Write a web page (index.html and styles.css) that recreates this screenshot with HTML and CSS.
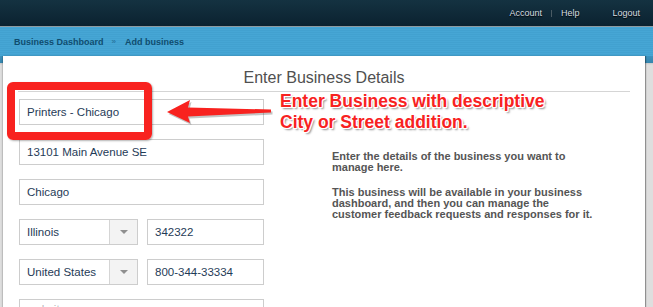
FILE: index.html
```html
<!DOCTYPE html>
<html>
<head>
<meta charset="utf-8">
<link rel="stylesheet" href="styles.css">
</head>
<body>
<div class="topbar">
  <nav class="topnav">
    <a class="nav-link">Account</a>
    <span class="nav-sep"></span>
    <a class="nav-link">Help</a>
    <a class="nav-link logout">Logout</a>
  </nav>
</div>
<div class="crumbbar">
  <span class="crumb">Business Dashboard</span>
  <span class="crumb-sep">»</span>
  <span class="crumb">Add business</span>
</div>
<div class="stage">
  <div class="panel">
    <h1 class="title">Enter Business Details</h1>
    <div class="rule"></div>
    <div class="content">
      <div class="form">
        <div class="field">Printers - Chicago</div>
        <div class="field">13101 Main Avenue SE</div>
        <div class="field">Chicago</div>
        <div class="row">
          <div class="select"><span class="select-text">Illinois</span><span class="select-btn"><span class="caret"></span></span></div>
          <div class="field small">342322</div>
        </div>
        <div class="row">
          <div class="select"><span class="select-text">United States</span><span class="select-btn"><span class="caret"></span></span></div>
          <div class="field small">800-344-33334</div>
        </div>
        <div class="field placeholder">website</div>
      </div>
      <div class="desc">
        <p>Enter the details of the business you want to<br>manage here.</p>
        <p>This business will be available in your business<br>dashboard, and then you can manage the<br>customer feedback requests and responses for it.</p>
      </div>
    </div>
    <div class="callout-box"></div>
    <svg class="callout-arrow" width="120" height="34" viewBox="0 0 120 34">
      <path d="M7 17 L30 5 L28 12.5 L111 14.5 L111 17.5 L28 21.5 L30 28 Z" fill="#555" opacity="0.35" transform="translate(1.5,2)"/>
      <path d="M7 17 L30 5 L28 12.5 L111 14.5 L111 17.5 L28 21.5 L30 28 Z" fill="#f8221f"/>
    </svg>
    <div class="callout-text">Enter Business with descriptive<br>City or Street addition.</div>
  </div>
</div>
</body>
</html>
```
FILE: styles.css
```css
* { box-sizing: border-box; }
html, body { margin: 0; padding: 0; }
body {
  width: 653px;
  height: 307px;
  overflow: hidden;
  font-family: "Liberation Sans", Arial, sans-serif;
  background: #dcdcdc;
}
.topbar {
  height: 27px;
  background: linear-gradient(#143241, #0b2230);
  border-bottom: 1px solid #8d9ba1;
  display: flex;
  justify-content: flex-end;
}
.topnav {
  display: flex;
  align-items: center;
  height: 26px;
  padding-right: 13px;
}
.nav-link {
  font-size: 9px;
  color: #d6dde0;
  text-shadow: 0 1px 1px #000;
}
.nav-sep {
  width: 1px;
  height: 7px;
  background: #4a5b64;
  margin: 0 9px 0 9px;
}
.logout { margin-left: 33px; }
.crumbbar {
  height: 29px;
  background: repeating-linear-gradient(#46a6d5 0 1px, #42a1d0 1px 2px);
  display: flex;
  align-items: center;
  padding-left: 14px;
}
.crumb {
  font-size: 9px;
  font-weight: bold;
  color: #104d6f;
}
.crumb-sep {
  font-size: 8px;
  color: #1e6b92;
  margin: 0 9px 0 8px;
}
.stage {
  background: linear-gradient(#3d93bf 0, #3585ad 7px, #c9c9c9 7px, #dedede 9px);
  padding-left: 3px;
  padding-right: 8px;
  height: 251px;
}
.panel {
  position: relative;
  background: #fff;
  height: 100%;
  box-shadow: 1px 0 1px rgba(0,0,0,0.35), -1px 0 1px rgba(0,0,0,0.15);
  padding: 12px 15px 0 15px;
}
.title {
  margin: 0;
  font-size: 16px;
  font-weight: normal;
  line-height: 19px;
  color: #505050;
  text-align: center;
}
.rule {
  height: 1px;
  background: #d5d5d5;
  margin-top: 4px;
}
.content {
  display: flex;
  padding-top: 7px;
}
.form {
  width: 245px;
  flex-shrink: 0;
  margin-left: 1px;
  display: flex;
  flex-direction: column;
  gap: 14px;
}
.field {
  height: 26px;
  flex-shrink: 0;
  border: 1px solid #cdcdcd;
  padding-left: 7px;
  display: flex;
  align-items: center;
  font-size: 11.5px;
  color: #1f3b57;
  background: #fff;
}
.field.small { width: 117px; }
.placeholder { color: #b8b8b8; padding-bottom: 6px; }
.row {
  display: flex;
  gap: 9px;
  height: 26px;
  flex-shrink: 0;
}
.select {
  width: 119px;
  height: 26px;
  border: 1px solid #cdcdcd;
  display: flex;
}
.select-text {
  flex: 1;
  padding-left: 7px;
  display: flex;
  align-items: center;
  font-size: 11.5px;
  color: #1f3b57;
}
.select-btn {
  width: 28px;
  border-left: 1px solid #d5d5d5;
  background: #f3f3f3;
  display: flex;
  align-items: center;
  justify-content: center;
}
.caret {
  width: 0;
  height: 0;
  border-left: 4px solid transparent;
  border-right: 4px solid transparent;
  border-top: 4px solid #8f8f8f;
}
.desc {
  margin-left: 68px;
  padding-top: 52px;
  white-space: nowrap;
}
.desc p {
  margin: 0 0 14px 0;
  font-size: 11px;
  font-weight: bold;
  line-height: 11px;
  color: #555;
}
.callout-box {
  position: absolute;
  left: 4px;
  top: 26px;
  width: 145px;
  height: 58px;
  border: 8px solid #f8221f;
  border-radius: 6px;
  box-shadow: 1px 1px 2px rgba(0,0,0,0.3);
}
.callout-arrow {
  position: absolute;
  left: 157px;
  top: 39px;
}
.callout-text {
  position: absolute;
  left: 277px;
  top: 35px;
  font-size: 17.5px;
  font-weight: bold;
  line-height: 21px;
  color: #f8221f;
  white-space: nowrap;
  text-shadow:
    1px 0 0 #fff, -1px 0 0 #fff, 0 1px 0 #fff, 0 -1px 0 #fff,
    1px 1px 0 #fff, -1px -1px 0 #fff, 1px -1px 0 #fff, -1px 1px 0 #fff,
    2px 2px 2px rgba(0,0,0,0.45);
}
```
